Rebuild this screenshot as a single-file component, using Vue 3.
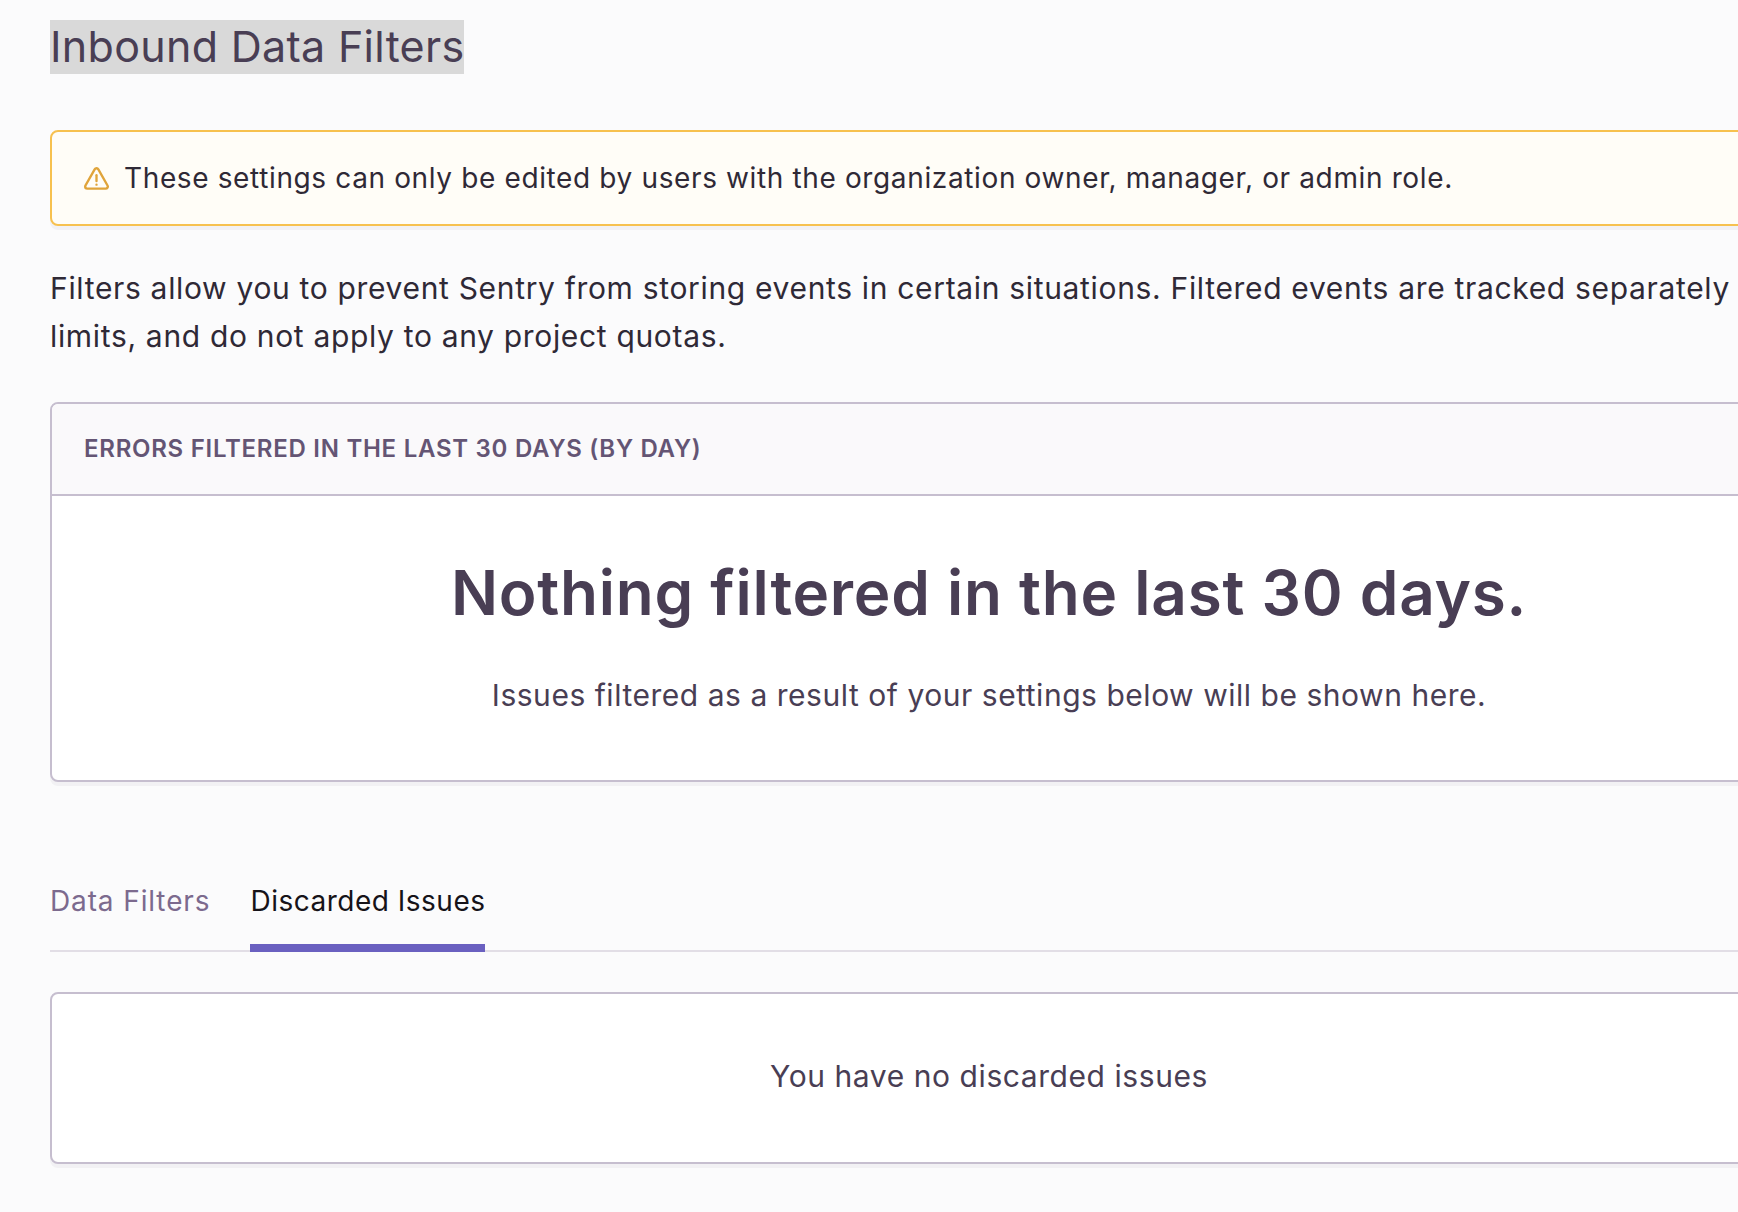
<script setup>
const tabs = [
  { label: "Data Filters", active: false },
  { label: "Discarded Issues", active: true },
];
</script>

<template>
  <div class="page">
    <h1 class="title"><span class="title-text">Inbound Data Filters</span></h1>

    <div class="alert">
      <svg class="alert-icon" viewBox="0 0 16 16" fill="#e0a43a">
        <path d="M13.87,15.26H2.13A2.1,2.1,0,0,1,0,13.16a2.07,2.07,0,0,1,.27-1L6.17,1.8a2.1,2.1,0,0,1,1.27-1,2.11,2.11,0,0,1,2.39,1L15.7,12.11a2.1,2.1,0,0,1-1.83,3.15ZM8,2.24a.44.44,0,0,0-.16,0,.58.58,0,0,0-.37.28L1.61,12.86a.52.52,0,0,0-.08.3.6.6,0,0,0,.6.6H13.87a.6.6,0,0,0,.52-.9L8.53,2.54A.61.61,0,0,0,8,2.24Z" />
        <path d="M8,10.37a.75.75,0,0,1-.75-.75V5.92a.75.75,0,0,1,1.5,0v3.7A.75.75,0,0,1,8,10.37Z" />
        <circle cx="8" cy="11.94" r=".75" />
      </svg>
      <span>These settings can only be edited by users with the organization owner, manager, or admin role.</span>
    </div>

    <p class="intro">
      Filters allow you to prevent Sentry from storing events in certain situations. Filtered events are tracked separately from rate limits, and do not apply to any project quotas.
    </p>

    <section class="panel">
      <header class="panel-header">Errors filtered in the last 30 days (by day)</header>
      <div class="panel-body">
        <h2 class="empty-title">Nothing filtered in the last 30 days.</h2>
        <p class="empty-sub">Issues filtered as a result of your settings below will be shown here.</p>
      </div>
    </section>

    <nav class="tabs">
      <a v-for="tab in tabs" :key="tab.label" class="tab" :class="{ active: tab.active }">{{ tab.label }}</a>
    </nav>

    <section class="panel discarded">You have no discarded issues</section>
  </div>
</template>

<style scoped>
.page {
  box-sizing: border-box;
  width: 1878px;
  margin-left: 50px;
  padding-top: 20px;
  font-family: Inter, "Liberation Sans", sans-serif;
  font-size: 28px;
  line-height: 48px;
  letter-spacing: 0.63px;
  color: #2f2936;
}
.title {
  margin: 0 0 56px;
  font-size: 43px;
  font-weight: 400;
  line-height: 52px;
  letter-spacing: 0.3px;
  color: #493e54;
}
.title-text {
  display: inline-block;
  padding-bottom: 2px;
  background: #d9d9d9;
}
.alert {
  box-sizing: border-box;
  height: 96px;
  display: flex;
  align-items: center;
  gap: 15px;
  padding: 0 32px;
  background: #fffdf7;
  border: 2px solid #f7c14f;
  border-radius: 8px;
  box-shadow: 0 4px 0 rgba(37, 11, 54, 0.04);
}
.alert-icon {
  width: 25px;
  height: 25px;
  flex: none;
}
.intro {
  margin: 38px 0 42px;
  font-size: 30px;
  letter-spacing: 0.67px;
}
.panel {
  box-sizing: border-box;
  background: #fff;
  border: 2px solid #c6becf;
  border-radius: 8px;
  box-shadow: 0 4px 0 rgba(37, 11, 54, 0.04);
}
.panel-header {
  box-sizing: border-box;
  height: 92px;
  padding: 0 32px;
  display: flex;
  align-items: center;
  background: #faf9fb;
  border-bottom: 2px solid #c6becf;
  border-radius: 6px 6px 0 0;
  font-size: 24px;
  font-weight: 600;
  letter-spacing: 0.73px;
  text-transform: uppercase;
  color: #645574;
}
.panel-body {
  height: 284px;
  padding-top: 62px;
  box-sizing: border-box;
  text-align: center;
  color: #493e54;
}
.empty-title {
  margin: 0 0 43px;
  font-size: 62px;
  font-weight: 600;
  line-height: 70px;
  letter-spacing: 0.75px;
}
.empty-sub {
  margin: 0;
  font-size: 30px;
  letter-spacing: 0.53px;
}
.tabs {
  display: flex;
  gap: 40px;
  margin: 96px 0 40px;
  border-bottom: 2px solid #e2dee6;
}
.tab {
  line-height: 46px;
  padding-bottom: 20px;
  border-bottom: 8px solid transparent;
  margin-bottom: -2px;
  letter-spacing: 0.88px;
  color: #7c6a8e;
}
.tab.active {
  letter-spacing: 0.5px;
  color: #161319;
  border-bottom-color: #6a60c0;
}
.discarded {
  height: 172px;
  padding-bottom: 5px;
  display: flex;
  align-items: center;
  justify-content: center;
  font-size: 30px;
  letter-spacing: 0.57px;
  color: #493e54;
}
</style>

<style>
html,
body {
  margin: 0;
  height: 100%;
  overflow: hidden;
  background: #fbfbfc;
}
</style>
